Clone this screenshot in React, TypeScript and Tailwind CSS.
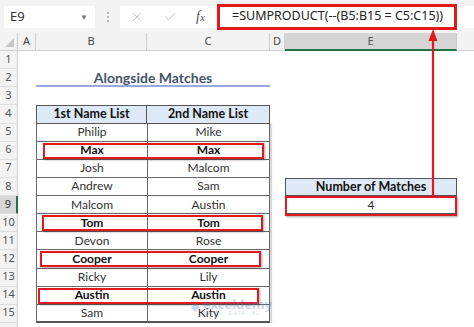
import { X, Check } from 'lucide-react';

type NameRow = [string, string, boolean];

const names: NameRow[] = [
  ['Philip', 'Mike', false],
  ['Max', 'Max', true],
  ['Josh', 'Malcom', false],
  ['Andrew', 'Sam', false],
  ['Malcom', 'Austin', false],
  ['Tom', 'Tom', true],
  ['Devon', 'Rose', false],
  ['Cooper', 'Cooper', true],
  ['Ricky', 'Lily', false],
  ['Austin', 'Austin', true],
  ['Sam', 'Kity', false],
];

// left edge of the hand drawn red box, per matching row
const boxLeft: Record<number, string> = {
  6: 'left-[43px]',
  10: 'left-[42px]',
  12: 'left-[40px]',
  14: 'left-[38px]',
};

const cellFont = "font-['Lato','Liberation_Sans',sans-serif]";
const uiFont = "font-['Noto_Sans','Liberation_Sans',sans-serif]";

function RowHeader({ n }: { n?: number }) {
  const selected = n === 9;
  return (
    <div
      className={`w-[18px] shrink-0 h-full flex items-end justify-center pb-[1px] text-[11px] border-b border-[#dedede] ${uiFont} ${
        selected
          ? 'bg-[#d6d6d6] text-[#333] border-r-2 border-r-[#217346]'
          : 'bg-[#f3f3f3] text-[#555] border-r border-r-[#d0d0d0]'
      }`}
    >
      {n}
    </div>
  );
}

function Row({ n, children }: { n?: number; children?: React.ReactNode }) {
  return (
    <div className="relative flex h-[18.14px]">
      <RowHeader n={n} />
      <div className="w-[18px] shrink-0" />
      {children}
    </div>
  );
}

function RedBox({ className }: { className: string }) {
  return (
    <div
      className={`absolute border-[2.5px] border-[#e2191f] shadow-[1px_1px_2px_rgba(0,0,0,0.35)] pointer-events-none ${className}`}
    />
  );
}

function ColHeader() {
  const cols: [string, string][] = [
    ['A', 'w-[18px]'],
    ['B', 'w-[111px]'],
    ['C', 'w-[123px]'],
    ['D', 'w-[15px]'],
  ];
  return (
    <div className={`flex h-[18px] text-[11px] text-[#444] ${uiFont}`}>
      <div className="w-[18px] shrink-0 bg-[#f3f3f3] border-r border-b border-[#d0d0d0] flex items-end justify-end p-[3px]">
        <svg width="9" height="9" viewBox="0 0 9 9">
          <polygon points="9,0 9,9 0,9" fill="#c6c6c6" />
        </svg>
      </div>
      {cols.map(([c, w]) => (
        <div
          key={c}
          className={`${w} shrink-0 bg-[#f3f3f3] border-r border-b border-[#d0d0d0] flex items-center justify-center`}
        >
          {c}
        </div>
      ))}
      <div className="w-[172px] shrink-0 bg-[#d6d6d6] border-r border-r-[#c8c8c8] border-b-2 border-b-[#217346] flex items-center justify-center text-[#555]">
        E
      </div>
      <div className="flex-1 bg-[#f3f3f3] border-b border-[#d0d0d0]" />
    </div>
  );
}

function FormulaBar() {
  return (
    <div className={`h-[33px] bg-[#f3f3f3] flex items-center pl-[4px] ${uiFont}`}>
      <div className="w-[91px] h-[22px] bg-white flex items-center justify-between pl-[6px] pr-[7px] text-[13px] text-[#333]">
        <span>E9</span>
        <span className="text-[8px] text-[#777]">▼</span>
      </div>
      <div className="w-[25px] flex flex-col items-center justify-center gap-[2px]">
        <span className="w-[2px] h-[2px] bg-[#b8b8b8]" />
        <span className="w-[2px] h-[2px] bg-[#b8b8b8]" />
        <span className="w-[2px] h-[2px] bg-[#b8b8b8]" />
      </div>
      <div className="flex-1 h-[22px] bg-white flex items-center">
        <div className="w-[97px] h-full flex items-center pl-[10px]">
          <X className="w-[14px] h-[14px] text-[#b4b4b4]" strokeWidth={1.4} />
          <Check className="w-[14px] h-[14px] text-[#b4b4b4] ml-[19px]" strokeWidth={1.4} />
          <span className="ml-[19px] text-[14px] italic text-[#555] font-['Liberation_Serif',serif]">
            f<span className="text-[11px]">x</span>
          </span>
        </div>
        <div className="w-[240px] h-[26px] shrink-0 border-[3px] border-[#e2191f] bg-white flex items-center pl-[12px] text-[12.5px] text-[#222] whitespace-nowrap">
          =SUMPRODUCT(--(B5:B15 = C5:C15))
        </div>
      </div>
    </div>
  );
}

export default function App() {
  return (
    <div className="relative w-[474px] h-[327px] overflow-hidden bg-white">
      <FormulaBar />
      <ColHeader />

      <div className={`text-[#333] ${cellFont}`}>
        <Row n={1} />
        <Row n={2}>
          <div className="w-[234px] shrink-0 border-b-2 border-[#9aa6dc] flex items-center justify-center text-[14px] font-bold text-[#44546a]">
            Alongside Matches
          </div>
        </Row>
        <Row n={3} />
        <Row n={4}>
          <div className="w-[111px] shrink-0 bg-[#dde9f6] border border-[#555] flex items-center justify-center text-[12.5px] font-bold text-[#111]">
            1st Name List
          </div>
          <div className="w-[123px] shrink-0 bg-[#dde9f6] border-y border-r border-[#555] flex items-center justify-center text-[12.5px] font-bold text-[#111]">
            2nd Name List
          </div>
        </Row>
        {names.map(([b, c, match], i) => {
          const n = i + 5;
          const last = n === 15;
          return (
            <Row key={n} n={n}>
              <div
                className={`w-[111px] shrink-0 border-l border-b border-[#6a6a6a] flex items-center justify-center text-[12px] ${
                  match ? 'font-bold text-[#111]' : ''
                } ${last ? 'border-b-2 border-b-[#555]' : ''}`}
              >
                {b}
              </div>
              <div
                className={`w-[123px] shrink-0 border-x border-b border-[#6a6a6a] flex items-center justify-center text-[12px] shadow-[2px_0_1px_rgba(0,0,0,0.15)] ${
                  match ? 'font-bold text-[#111]' : ''
                } ${last ? 'border-b-2 border-b-[#555]' : ''}`}
              >
                {c}
              </div>
              {n === 8 && (
                <>
                  <div className="w-[15px] shrink-0" />
                  <div className="w-[172px] shrink-0 bg-[#dde9f6] border border-[#555] flex items-center justify-center text-[12.5px] font-bold text-[#111]">
                    Number of Matches
                  </div>
                </>
              )}
              {n === 9 && (
                <>
                  <div className="w-[15px] shrink-0" />
                  <div className="w-[172px] shrink-0 border-x border-b border-[#555] flex items-center justify-center text-[12px]">
                    4
                  </div>
                  <RedBox className="left-[285px] w-[172px] top-0 h-[20px]" />
                </>
              )}
              {match && <RedBox className={`${boxLeft[n]} w-[221px] top-[1px] h-[16px]`} />}
            </Row>
          );
        })}
        <Row />
      </div>

      {/* arrow from the result cell up to the formula */}
      <svg
        className="absolute left-[426px] top-[28px] pointer-events-none"
        width="16"
        height="170"
        viewBox="0 0 16 170"
      >
        <line x1="7" y1="10" x2="7" y2="169" stroke="#e2191f" strokeWidth="2.2" />
        <polygon points="7,1 2.5,13 11.5,13" fill="#e2191f" />
      </svg>

      {/* watermark */}
      <div className="absolute left-[190px] top-[298px] flex items-center gap-[2px] opacity-30 pointer-events-none">
        <svg width="11" height="11" viewBox="0 0 12 12">
          <polygon points="1,6 6,1 11,6 6,11" fill="#5a7fc4" />
        </svg>
        <div className="flex flex-col leading-none">
          <span className={`text-[13px] font-bold text-[#5a7fc4] ${uiFont}`}>exceldemy</span>
          <span className={`text-[5px] tracking-[1px] text-[#5a7fc4] ${uiFont}`}>EXCEL · DATA · BI</span>
        </div>
      </div>
    </div>
  );
}
